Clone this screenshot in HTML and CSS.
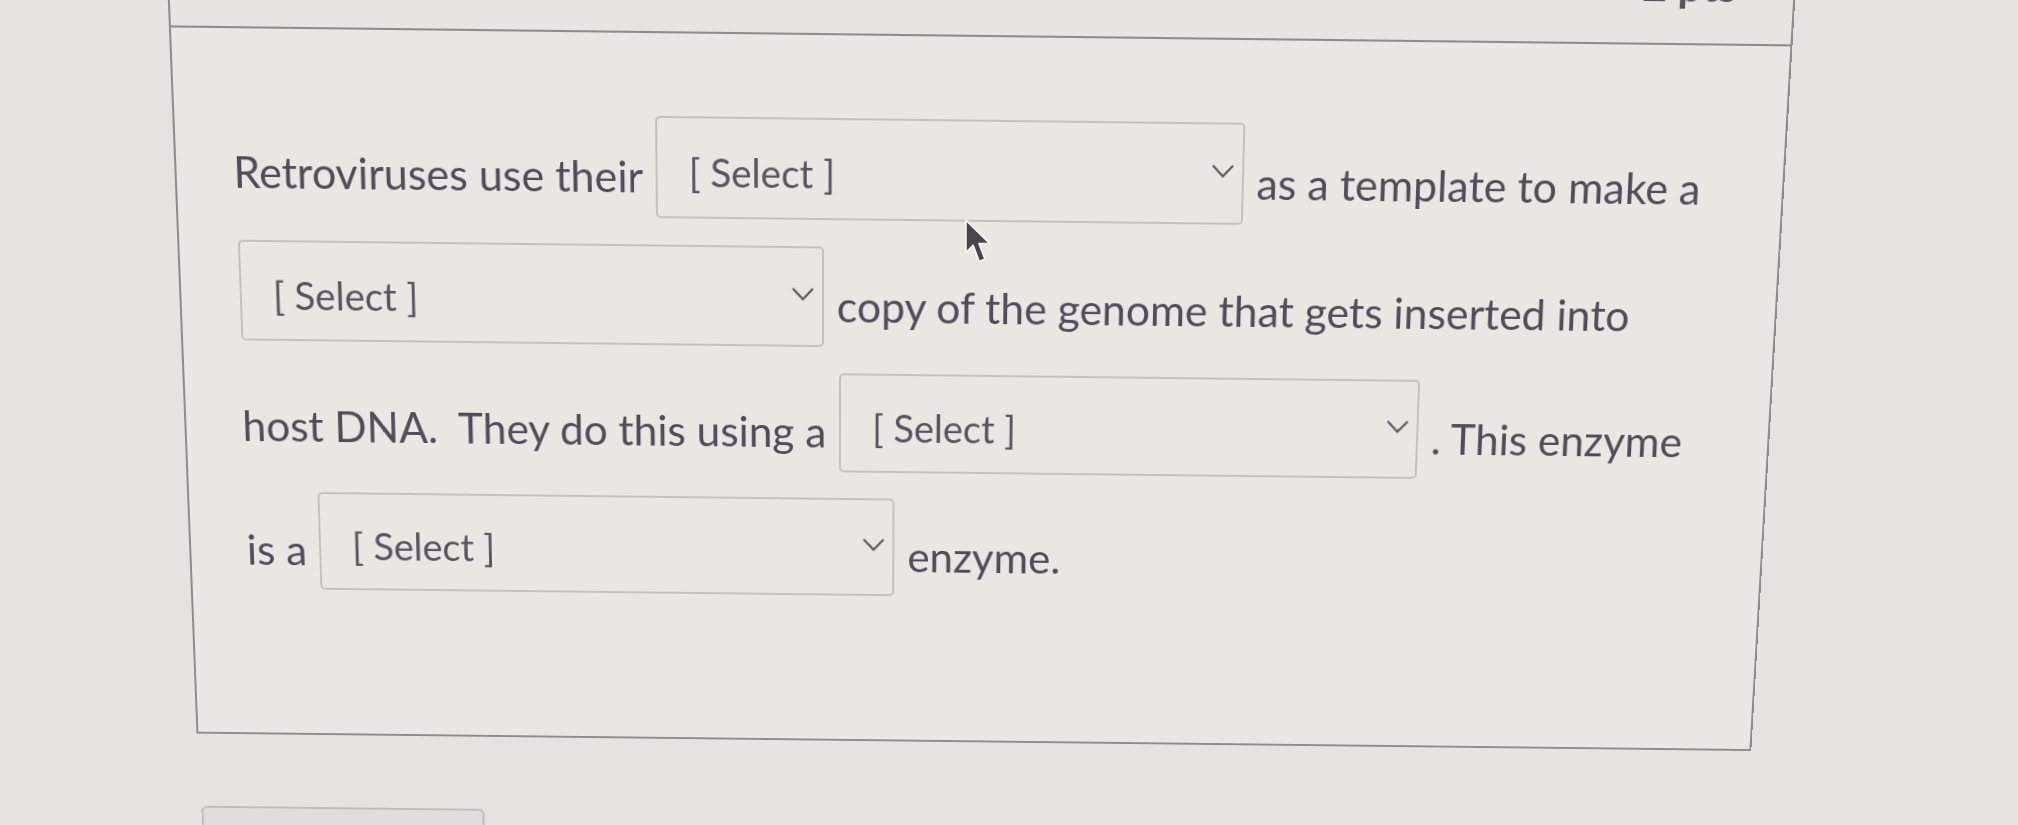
FILE: index.html
```html
<!DOCTYPE html>
<html lang="en">
<head>
<meta charset="utf-8">
<title>Quiz question</title>
<link rel="stylesheet" href="styles.css">
</head>
<body>
<div class="page">
  <section class="question">
    <header class="q-header"><span class="q-points">2 pts</span></header>
    <div class="q-body">
      <p class="q-text">Retroviruses use their <span class="dd"><span class="dd-inner"><span class="dd-label">[ Select ]</span><svg class="dd-caret" viewBox="0 0 22 13" aria-hidden="true"><path d="M1 1 L11 11.5 L21 1"/></svg></span></span> as a template to make a <span class="dd"><span class="dd-inner"><span class="dd-label">[ Select ]</span><svg class="dd-caret" viewBox="0 0 22 13" aria-hidden="true"><path d="M1 1 L11 11.5 L21 1"/></svg></span></span> copy of the genome that gets inserted into host DNA.&nbsp; They do this using a <span class="dd"><span class="dd-inner"><span class="dd-label">[ Select ]</span><svg class="dd-caret" viewBox="0 0 22 13" aria-hidden="true"><path d="M1 1 L11 11.5 L21 1"/></svg></span></span> . This enzyme is a <span class="dd"><span class="dd-inner"><span class="dd-label">[ Select ]</span><svg class="dd-caret" viewBox="0 0 22 13" aria-hidden="true"><path d="M1 1 L11 11.5 L21 1"/></svg></span></span> enzyme.</p>
    </div>
  </section>
  <div class="q-nav"><button class="nav-btn" type="button"></button></div>
</div>
<svg class="cursor" viewBox="0 0 24 40" aria-hidden="true"><path d="M1.5 1 L1.5 28 L7.5 22 L12.5 35.5 L17.5 33.5 L12.5 20.5 L21.5 20.5 Z"/></svg>
</body>
</html>
```

FILE: styles.css
```css
html, body {
  margin: 0;
  padding: 0;
}

body {
  width: 2018px;
  height: 825px;
  overflow: hidden;
  background: #e4e3de;
  font-family: Lato, "Open Sans", "Liberation Sans", sans-serif;
  color: #4f4c5d;
}

.page {
  width: 2018px;
  height: 825px;
  display: flex;
  flex-direction: column;
  transform-origin: 50% 50%;
  transform: perspective(2000px) rotateX(-7deg) rotate(0.66deg);
}

.question {
  box-sizing: border-box;
  width: 1587px;
  margin: -50px 0 0 184px;
  border: 2px solid #8d8c8b;
  background: #e8e7e2;
}

.q-header {
  box-sizing: border-box;
  height: 91px;
  padding: 8px 55px 0 0;
  display: flex;
  justify-content: flex-end;
  align-items: flex-start;
  border-bottom: 2px solid #8d8c8b;
  background: #e6e5e0;
}

.q-points {
  font-size: 42px;
  font-weight: 700;
  color: #55535c;
}

.q-body {
  padding: 54px 56px 149px 56px;
}

.q-text {
  margin: 0;
  font-size: 42.4px;
  line-height: normal;
  color: #4f4c5d;
}

.dd {
  display: inline-block;
  box-sizing: border-box;
  width: 580px;
  height: 100px;
  margin: 26px 2px 0 2px;
  overflow: hidden;
  vertical-align: -25px;
  border: 2px solid #c3c2bd;
  border-radius: 5px;
  background: #e8e7e2;
}

.dd-inner {
  display: flex;
  justify-content: space-between;
  align-items: flex-start;
  padding: 29px 8px 0 31px;
}

.dd-label {
  font-size: 38px;
  line-height: normal;
  color: #575464;
}

.dd-caret {
  width: 22px;
  height: 13px;
  margin-top: 10px;
  fill: none;
  stroke: #5a5960;
  stroke-width: 2.2;
}

.q-nav {
  margin: 76px 0 0 186px;
}

.nav-btn {
  display: block;
  width: 290px;
  height: 60px;
  padding: 0;
  border: 2px solid #bebdb8;
  border-radius: 6px;
  background: #dfdeda;
}

.cursor {
  position: absolute;
  left: 964px;
  top: 219px;
  width: 29px;
  height: 48px;
  fill: #47464c;
  stroke: #f4f4f2;
  stroke-width: 1.5;
  stroke-linejoin: round;
}
```
